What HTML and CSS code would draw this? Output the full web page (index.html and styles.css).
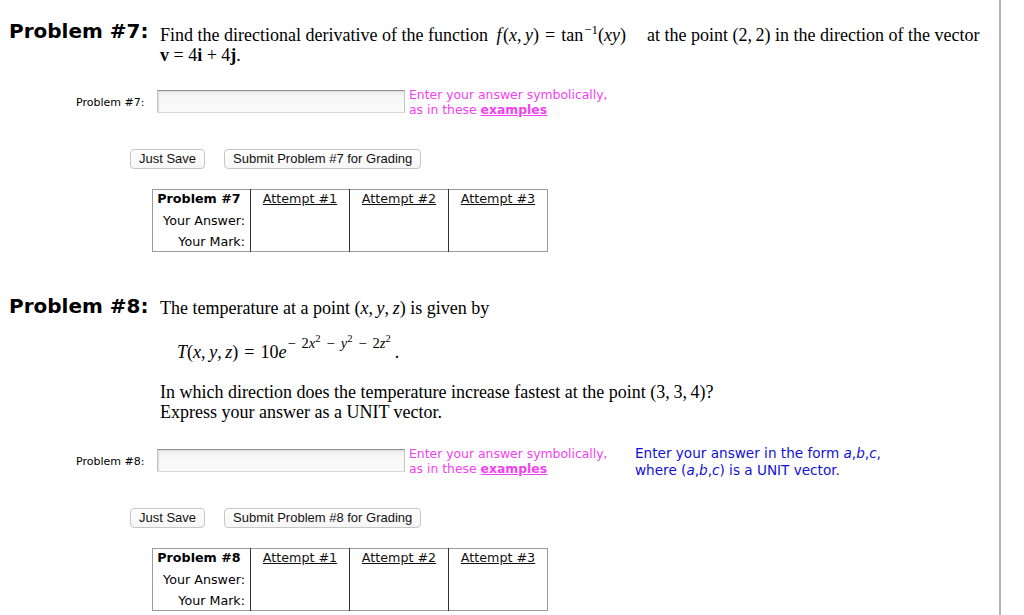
FILE: index.html
```html
<!DOCTYPE html>
<html>
<head>
<meta charset="utf-8">
<link rel="stylesheet" href="styles.css">
</head>
<body>
<div class="page">

  <section class="problem p7">
    <div class="head">
      <h2 class="ptitle">Problem #7:</h2>
      <div class="statement first">
        <p class="line">Find the directional derivative of the function <span class="math"><i>f</i>&#8202;(<i>x</i>,&#8201;<i>y</i>)<span class="op">=</span>tan<span class="sup">&minus;1</span>(<i>xy</i>)</span>at the point (2,&#8201;2) in the direction of the vector</p>
        <p class="line"><b>v</b> = 4<b>i</b> + 4<b>j</b>.</p>
      </div>
    </div>

    <div class="answer-row">
      <label class="alabel">Problem #7:</label>
      <div class="ainput"></div>
      <div class="hint-pink">Enter your answer symbolically,<br>as in these <a class="ex">examples</a></div>
    </div>

    <div class="buttons">
      <span class="btn">Just Save</span>
      <span class="btn">Submit Problem #7 for Grading</span>
    </div>

    <table class="attempts">
      <tr class="r1"><th class="c0 hd">Problem #7</th><td class="ca"><a>Attempt #1</a></td><td class="ca"><a>Attempt #2</a></td><td class="ca"><a>Attempt #3</a></td></tr>
      <tr class="r2"><td class="c0">Your Answer:</td><td class="ca"></td><td class="ca"></td><td class="ca"></td></tr>
      <tr class="r3"><td class="c0">Your Mark:</td><td class="ca"></td><td class="ca"></td><td class="ca"></td></tr>
    </table>
  </section>

  <section class="problem p8">
    <div class="head">
      <h2 class="ptitle">Problem #8:</h2>
      <div class="statement second">
        <p class="line">The temperature at a point (<i>x</i>,&#8201;<i>y</i>,&#8201;<i>z</i>) is given by</p>
        <p class="line eq"><i>T</i>(<i>x</i>,&#8201;<i>y</i>,&#8201;<i>z</i>)<span class="op">=</span>10<i>e</i><span class="exp"><span class="mi">&minus;</span>2<i>x</i><span class="sq">2</span><span class="mi">&minus;</span><i>y</i><span class="sq">2</span><span class="mi">&minus;</span>2<i>z</i><span class="sq">2</span></span><span class="dot">.</span></p>
        <p class="line gap">In which direction does the temperature increase fastest at the point (3,&#8201;3,&#8201;4)?</p>
        <p class="line">Express your answer as a UNIT vector.</p>
      </div>
    </div>

    <div class="answer-row r8">
      <label class="alabel">Problem #8:</label>
      <div class="ainput"></div>
      <div class="hint-pink">Enter your answer symbolically,<br>as in these <a class="ex">examples</a></div>
      <div class="hint-blue">Enter your answer in the form <i>a</i>,<i>b</i>,<i>c</i>,<br>where (<i>a</i>,<i>b</i>,<i>c</i>) is a UNIT vector.</div>
    </div>

    <div class="buttons">
      <span class="btn">Just Save</span>
      <span class="btn">Submit Problem #8 for Grading</span>
    </div>

    <table class="attempts">
      <tr class="r1"><th class="c0 hd">Problem #8</th><td class="ca"><a>Attempt #1</a></td><td class="ca"><a>Attempt #2</a></td><td class="ca"><a>Attempt #3</a></td></tr>
      <tr class="r2"><td class="c0">Your Answer:</td><td class="ca"></td><td class="ca"></td><td class="ca"></td></tr>
      <tr class="r3"><td class="c0">Your Mark:</td><td class="ca"></td><td class="ca"></td><td class="ca"></td></tr>
    </table>
  </section>

</div>
</body>
</html>
```

FILE: styles.css
```css
html, body {
  margin: 0;
  padding: 0;
  background: #ffffff;
}

.page {
  width: 1001px;
  min-height: 615px;
  border-right: 2px solid #b4b4b4;
  box-sizing: border-box;
  padding-top: 21px;
  font-family: "DejaVu Sans", Verdana, sans-serif;
  color: #000;
}

.head {
  display: flex;
  align-items: flex-start;
}

.ptitle {
  flex: 0 0 160px;
  box-sizing: border-box;
  padding-left: 9px;
  margin: 0;
  font-family: "DejaVu Sans", Verdana, sans-serif;
  font-weight: bold;
  font-size: 20px;
  line-height: 20px;
  white-space: nowrap;
}

.statement {
  font-family: "Liberation Serif", "Times New Roman", serif;
  font-size: 18px;
  line-height: 20px;
}

.statement.first { margin-top: 4px; }
.statement.second { margin-top: 2px; }

.line {
  margin: 0;
  white-space: nowrap;
}

.math {
  margin-left: 4px;
  margin-right: 21px;
}

.op {
  margin: 0 6px;
}

.sup {
  font-size: 13px;
  vertical-align: 7px;
  line-height: 0;
  margin-left: 1px;
}

.eq {
  margin-top: 21px;
  padding-left: 17px;
}

.exp {
  font-size: 14.5px;
  vertical-align: 10px;
  line-height: 0;
  margin-left: 1px;
}

.mi {
  margin: 0 6px 0 6px;
}

.exp .mi:first-child {
  margin-left: 0;
}

.sq {
  font-size: 10.5px;
  vertical-align: 6px;
  line-height: 0;
}

.dot { margin-left: 4px; }

.gap { margin-top: 20px; }

.p8 { margin-top: 44px; }

.answer-row {
  display: flex;
  align-items: center;
  height: 23px;
  margin-top: 25px;
  padding-left: 76px;
}

.answer-row.r8 { margin-top: 27px; }

.alabel {
  flex: 0 0 81px;
  font-size: 11px;
  line-height: 14px;
  padding-top: 2px;
}

.ainput {
  flex: 0 0 248px;
  height: 23px;
  box-sizing: border-box;
  border: 1px solid #c4c4c4;
  border-top-color: #8e8e8e;
  border-bottom-color: #d8d8d8;
  background: linear-gradient(#ececec, #f7f7f7 30%, #fafafa);
  box-shadow: inset 1px 1px 1px #dcdcdc;
}

.hint-pink {
  flex: 0 0 226px;
  margin-left: 4px;
  color: #f23ff2;
  font-size: 12.4px;
  line-height: 15px;
  white-space: nowrap;
  margin-top: 1px;
}

.ex {
  font-weight: bold;
  text-decoration: underline;
}

.hint-blue {
  color: #1010d8;
  font-size: 13.6px;
  line-height: 17px;
  white-space: nowrap;
  margin-top: 2px;
}

.buttons {
  display: flex;
  gap: 19px;
  margin-top: 36px;
  padding-left: 130px;
}

.btn {
  display: inline-block;
  height: 20px;
  box-sizing: border-box;
  padding: 0 8px;
  border: 1px solid #c6c6c6;
  border-radius: 4px;
  background: linear-gradient(#ffffff, #f6f6f6);
  font-family: "Liberation Sans", Arial, sans-serif;
  font-size: 13px;
  line-height: 18px;
  color: #111;
  white-space: nowrap;
}

.attempts {
  margin-top: 20px;
  margin-left: 152px;
  border-collapse: collapse;
  border: 1px solid #9a9a9a;
  font-size: 12.7px;
}

.attempts td, .attempts th {
  padding: 0;
  line-height: 16px;
  vertical-align: top;
}

.attempts .r1 { height: 19px; }
.attempts .r2 { height: 22px; }
.attempts .r3 { height: 21px; }

.attempts .r1 > * { padding-top: 1px; }
.attempts .r2 > * { padding-top: 4px; }
.attempts .r3 > * { padding-top: 3px; }

.c0 {
  width: 92px;
  padding-right: 5px !important;
  text-align: right;
  white-space: nowrap;
}

.c0.hd {
  text-align: center;
  padding-left: 0 !important;
  padding-right: 5px !important;
  width: 92px;
  font-weight: bold;
}

.ca {
  width: 98px;
  text-align: center;
  border-left: 1px solid #333;
}

.ca a {
  color: #111;
  text-decoration: underline;
}
```
